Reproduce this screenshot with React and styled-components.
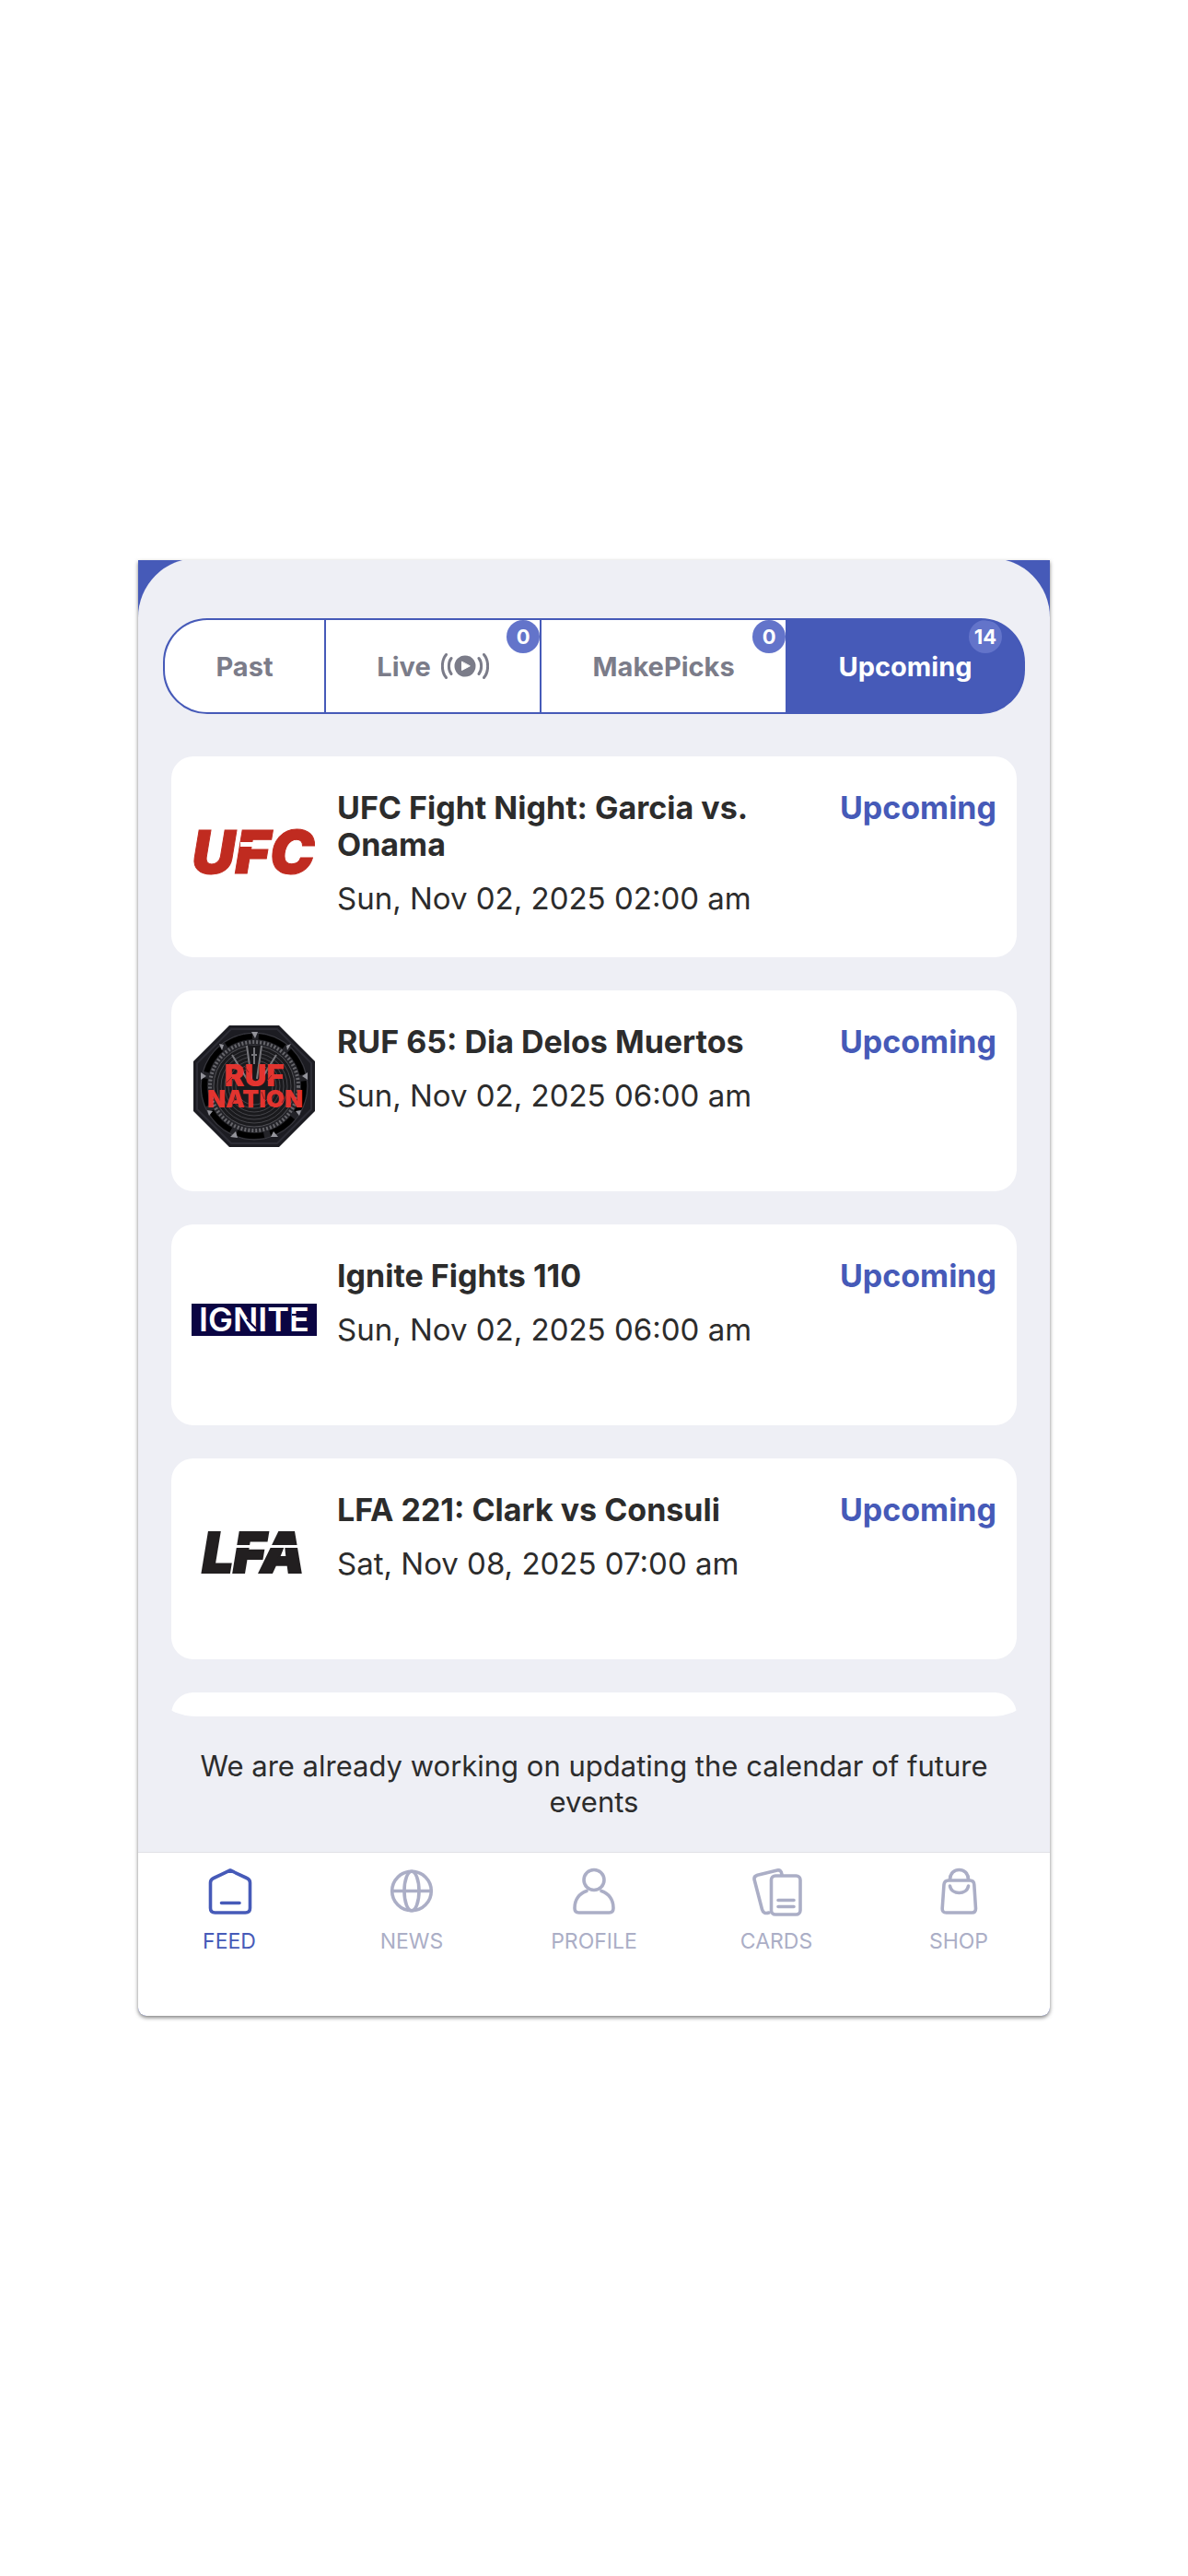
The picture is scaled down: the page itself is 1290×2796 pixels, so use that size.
import React, { useState } from "react";
import styled, { createGlobalStyle } from "styled-components";

const tabs = [
  { name: "Past" },
  { name: "Live", count: 0, live: true },
  { name: "MakePicks", count: 0 },
  { name: "Upcoming", count: 14 },
];

const UfcLogo = () => (
  <svg width="136" height="136" viewBox="0 0 136 136" role="img" aria-label="UFC">
    <LogoText
      x="67"
      y="91"
      textAnchor="middle"
      $size={65}
      fill="#c02b20"
      stroke="#c02b20"
      strokeWidth="1"
      fontStyle="italic"
    >
      UFC
    </LogoText>
    <path d="M53 59.5H86" stroke="#fff" strokeWidth="5" />
  </svg>
);

const RufLogo = () => (
  <svg width="136" height="136" viewBox="0 0 136 136" role="img" aria-label="RUF Nation">
    <polygon points="41,2 95,2 134,41 134,95 95,134 41,134 2,95 2,41" fill="#1c1c22" />
    <polygon points="43,6 93,6 130,43 130,93 93,130 43,130 6,93 6,43" fill="none" stroke="#2c2c35" strokeWidth="2" />
    <circle cx="68" cy="68" r="58" fill="#232328" stroke="#3a3a41" strokeWidth="1" />
    <circle cx="68" cy="68" r="54" fill="none" stroke="#000" strokeWidth="6" strokeDasharray="30 7" />
    <circle cx="68" cy="68" r="48" fill="none" stroke="#66666b" strokeWidth="4" strokeDasharray="2 2" />
    <circle cx="68" cy="68" r="44" fill="#1a1a1d" stroke="#515156" />
    {[40, 36, 32, 28, 24, 20].map((r) => (
      <circle key={r} cx="68" cy="68" r={r} fill="none" stroke="#45454a" />
    ))}
    <path d="M60 24L65 60H71L76 24Z" fill="#17171a" />
    <path d="M60 24L65 60M76 24L71 60M44 34L60 60M92 34L76 60M68 26V44M65 34H71" stroke="#77777c" strokeWidth="2" fill="none" />
    <path
      d="M65 9H72L69 16ZM30 22L35 23L33 29ZM103 24L108 22L104 29ZM10 53L16 57L10 61ZM126 53L120 57L126 61ZM17 94L23 95L19 100ZM119 94L113 95L117 100ZM48 117L50 124L42 123ZM89 117L94 123L86 123Z"
      fill="#94949b"
    />
    <LogoText textAnchor="middle" $size={33} fill="#e2342f">
      <tspan x="68" y="68">
        RUF
      </tspan>
      <SmallSpan x="69" y="91">
        NATION
      </SmallSpan>
    </LogoText>
    <path d="M38 64L44 58M58 47L62 53M82 62L87 56M44 87L48 80M76 74L79 82M98 86L102 79" stroke="#8a2022" />
  </svg>
);

const IgniteLogo = () => (
  <svg width="136" height="136" viewBox="0 0 136 136" role="img" aria-label="Ignite">
    <rect y="50" width="136" height="35" fill="#0b0543" />
    <LogoText x="68" y="80" textAnchor="middle" $size={36} $weight={600} fill="#fff">
      IGNITE
    </LogoText>
    <path d="M27 64H37M60 67L70 77M109 62H116" stroke="#0b0543" strokeWidth="2" />
  </svg>
);

const LfaLogo = () => (
  <svg width="136" height="136" viewBox="0 0 136 136" role="img" aria-label="LFA">
    <LogoText
      x="67"
      y="88"
      textAnchor="middle"
      $size={60}
      fill="#221f20"
      stroke="#221f20"
      strokeWidth="2"
      fontStyle="italic"
    >
      LFA
    </LogoText>
    <path d="M48 59.5H134" stroke="#fff" strokeWidth="3" />
  </svg>
);

const events = [
  { title: "UFC Fight Night: Garcia vs. Onama", date: "Sun, Nov 02, 2025 02:00 am", Logo: UfcLogo },
  { title: "RUF 65: Dia Delos Muertos", date: "Sun, Nov 02, 2025 06:00 am", Logo: RufLogo },
  { title: "Ignite Fights 110", date: "Sun, Nov 02, 2025 06:00 am", Logo: IgniteLogo },
  { title: "LFA 221: Clark vs Consuli", date: "Sat, Nov 08, 2025 07:00 am", Logo: LfaLogo },
];

const LiveIcon = () => (
  <svg width="52" height="32" viewBox="1 0 52 32" fill="none" stroke="currentColor" strokeWidth="3" strokeLinecap="round" aria-hidden="true">
    <circle cx="27" cy="16" r="11.5" fill="currentColor" stroke="none" />
    <path d="M23.5 11.5V20.5L32 16Z" fill="#fff" stroke="#fff" strokeWidth="1" />
    <path d="M12 7.5C8.5 12 8.5 20 12 24.5M6.5 3.5C1 10 1 22 6.5 28.5M42 7.5C45.5 12 45.5 20 42 24.5M47.5 3.5C53 10 53 22 47.5 28.5" />
  </svg>
);

const navItems = [
  {
    name: "FEED",
    icon: (
      <path d="M31 4L49 12.5Q52.5 14 52.5 17.5V45Q52.5 50 47.5 50H14.5Q9.5 50 9.5 45V17.5Q9.5 14 13 12.5ZM21.5 39.5H41" />
    ),
  },
  {
    name: "NEWS",
    icon: (
      <>
        <circle cx="30" cy="26.5" r="21.3" />
        <ellipse cx="30" cy="26.5" rx="8" ry="21.3" />
        <path d="M9 26.5H51" />
      </>
    ),
  },
  {
    name: "PROFILE",
    icon: (
      <>
        <circle cx="30" cy="14.5" r="11" />
        <path d="M22 26.5C14 29 9 36 9 45Q9 50 13.5 50H46.5Q51 50 51 45C51 36 46 29 38 26.5" />
      </>
    ),
  },
  {
    name: "CARDS",
    icon: (
      <>
        <rect x="24.5" y="10" width="31.5" height="42" rx="4.5" />
        <path d="M36 9C35.5 5 34 3.5 31 4L9.5 9.2Q5.2 10.5 6.2 14.5L14.5 46.5Q16 52 22 50M32 36.5H49M32 43.5H49" />
      </>
    ),
  },
  {
    name: "SHOP",
    icon: (
      <>
        <path d="M19 15H42Q46.5 15 46.8 19.5L48.5 45.5Q48.5 50 44.5 50H16.5Q12 50 12.2 45.5L14 19.5Q14.5 15 19 15Z" />
        <path d="M20.5 14C20.5 0 40.5 0 40.5 14M20.5 21C22 31 39 31 40.5 21" />
      </>
    ),
  },
];

const App = () => {
  const [activeTab, setActiveTab] = useState("Upcoming");

  return (
    <Page>
      <GlobalStyle />
      <Screen>
        <Sheet>
          <Tabs>
            {tabs.map((tab) => (
              <Tab
                key={tab.name}
                type="button"
                $active={tab.name === activeTab}
                onClick={() => setActiveTab(tab.name)}
              >
                {tab.name}
                {tab.live && <LiveIcon />}
                {tab.count !== undefined && <Badge>{tab.count}</Badge>}
              </Tab>
            ))}
          </Tabs>
          <EventList>
            {events.map(({ title, date, Logo }) => (
              <EventCard key={title}>
                <Logo />
                <EventInfo>
                  <EventTitle>{title}</EventTitle>
                  <EventDate>{date}</EventDate>
                </EventInfo>
                <Status>Upcoming</Status>
              </EventCard>
            ))}
            <EventCard />
          </EventList>
          <Note>We are already working on updating the calendar of future events</Note>
        </Sheet>
        <NavBar>
          {navItems.map((item) => (
            <NavLink key={item.name} href="#" $active={item.name === "FEED"}>
              <NavIcon viewBox="0 0 60 56" aria-hidden="true">
                {item.icon}
              </NavIcon>
              {item.name}
            </NavLink>
          ))}
        </NavBar>
      </Screen>
    </Page>
  );
};

export default App;

const GlobalStyle = createGlobalStyle`
  * {
    box-sizing: border-box;
  }
  body {
    margin: 0;
    background-color: #fff;
    font-family: Inter, "Liberation Sans", sans-serif;
  }
`;

const Page = styled.div`
  display: flex;
  flex-direction: column;
  justify-content: center;
  min-height: 100vh;
  padding: 0 150px;
`;

const Screen = styled.main`
  overflow: hidden;
  border-radius: 0 0 9px 9px;
  background-color: #465ab8;
  box-shadow: 0 2px 4px rgba(0, 0, 0, 0.5);
`;

const Sheet = styled.section`
  margin-top: -2px;
  padding-top: 65px;
  border-radius: 64px 64px 0 0;
  background-color: #eeeff5;
`;

const Tabs = styled.div`
  display: flex;
  height: 104px;
  margin: 0 27px 46px;
  overflow: hidden;
  border: 2px solid #465ab8;
  border-radius: 48px;
  background-color: #465ab8;
`;

const Tab = styled.button`
  display: flex;
  flex: 1 1 auto;
  justify-content: center;
  align-items: center;
  gap: 11px;
  position: relative;
  padding: 0 54px;
  border: 0;
  border-right: 2px solid #465ab8;
  font-family: inherit;
  font-size: 29px;
  font-weight: 700;
  color: ${(props) => (props.$active ? "#fff" : "#7b7c89")};
  background-color: ${(props) => (props.$active ? "#465ab8" : "#fff")};
  cursor: pointer;
  &:last-child {
    border-right: 0;
  }
`;

const Badge = styled.span`
  position: absolute;
  top: 0;
  right: 0;
  width: 36px;
  height: 36px;
  border-radius: 50%;
  font-size: 22px;
  font-weight: 700;
  line-height: 36px;
  text-align: center;
  color: #fff;
  background-color: #6374ca;
  ${Tab}:last-child & {
    right: 23px;
  }
`;

const EventList = styled.ul`
  display: flex;
  flex-direction: column;
  gap: 36px;
  max-height: 1042px;
  margin: 0;
  padding: 0 36px;
  overflow: hidden;
  border-radius: 0 0 64px 64px;
  list-style: none;
`;

const EventCard = styled.li`
  display: flex;
  flex-shrink: 0;
  align-items: flex-start;
  gap: 22px;
  min-height: 218px;
  padding: 36px 22px;
  border-radius: 24px;
  background-color: #fff;
`;

const EventInfo = styled.div`
  flex: 1;
  color: #2c2c2c;
  line-height: 40px;
`;

const EventTitle = styled.h2`
  margin: 0 0 18px;
  font-size: 34px;
  font-weight: 700;
`;

const EventDate = styled.p`
  margin: 0;
  font-size: 33px;
`;

const Status = styled.span`
  color: #465ab8;
  font-size: 34px;
  font-weight: 700;
  line-height: 40px;
`;

const LogoText = styled.text`
  font-family: Inter, sans-serif;
  font-size: ${(props) => props.$size}px;
  font-weight: ${(props) => props.$weight || 900};
`;

const SmallSpan = styled.tspan`
  font-size: 26px;
`;

const Note = styled.p`
  margin: 0;
  padding: 34px 60px 35px;
  color: #2c2c2c;
  font-size: 31px;
  line-height: 39px;
  text-align: center;
`;

const NavBar = styled.nav`
  display: flex;
  padding: 15px 0 67px;
  border-top: 1px solid #e0e1e6;
  background-color: #fff;
`;

const NavLink = styled.a`
  display: flex;
  flex: 1;
  flex-direction: column;
  align-items: center;
  gap: 11px;
  color: ${(props) => (props.$active ? "#465ab8" : "#abaec6")};
  font-size: 23px;
  line-height: 28px;
  text-decoration: none;
`;

const NavIcon = styled.svg`
  width: 60px;
  height: 56px;
  fill: none;
  stroke: currentColor;
  stroke-width: 3.6;
  stroke-linecap: round;
  stroke-linejoin: round;
`;
